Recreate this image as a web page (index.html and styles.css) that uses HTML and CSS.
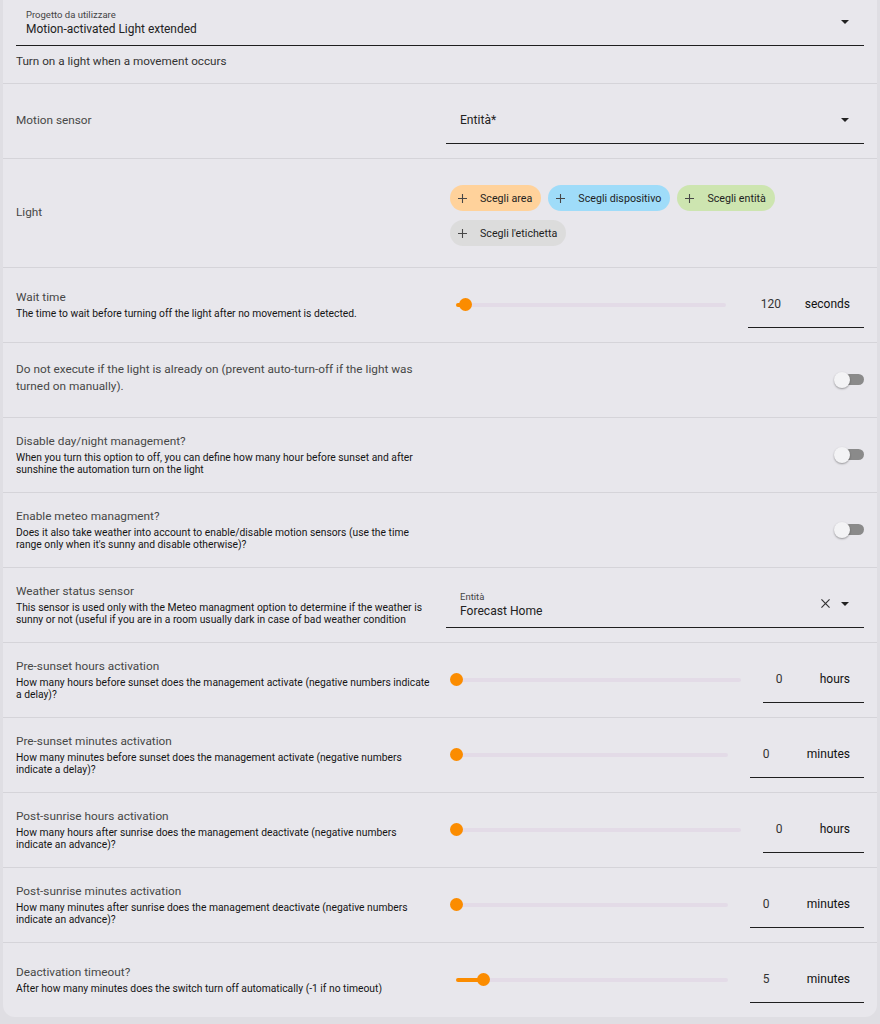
FILE: index.html
```html
<!DOCTYPE html>
<html lang="it">
<head>
<meta charset="utf-8">
<title>Blueprint</title>
<link rel="stylesheet" href="styles.css">
</head>
<body>
<div class="card">
  <div class="intro">
    <div class="select select-labelled">
      <div class="select-text">
        <span class="select-label">Progetto da utilizzare</span>
        <span class="select-value">Motion-activated Light extended</span>
      </div>
      <svg class="arrow" viewBox="0 0 10 5"><path d="M0 0h10L5 5z"/></svg>
    </div>
    <p class="intro-text">Turn on a light when a movement occurs</p>
  </div>

  <div class="row">
    <div class="info"><div class="title">Motion sensor</div></div>
    <div class="control">
      <div class="select">
        <div class="select-text"><span class="select-value">Entità*</span></div>
        <svg class="arrow" viewBox="0 0 10 5"><path d="M0 0h10L5 5z"/></svg>
      </div>
    </div>
  </div>

  <div class="row row-tall">
    <div class="info"><div class="title">Light</div></div>
    <div class="control">
      <div class="chips">
        <span class="chip chip-area"><svg class="plus" viewBox="0 0 10 10"><path d="M5 0v10M0 5h10"/></svg>Scegli area</span>
        <span class="chip chip-device"><svg class="plus" viewBox="0 0 10 10"><path d="M5 0v10M0 5h10"/></svg>Scegli dispositivo</span>
        <span class="chip chip-entity"><svg class="plus" viewBox="0 0 10 10"><path d="M5 0v10M0 5h10"/></svg>Scegli entità</span>
        <span class="chip chip-label"><svg class="plus" viewBox="0 0 10 10"><path d="M5 0v10M0 5h10"/></svg>Scegli l'etichetta</span>
      </div>
    </div>
  </div>

  <div class="row">
    <div class="info">
      <div class="title">Wait time</div>
      <div class="desc">The time to wait before turning off the light after no movement is detected.</div>
    </div>
    <div class="control">
      <div class="slider" style="--v: 3.5%"><span class="thumb"></span></div>
      <div class="number"><span class="num">120</span><span class="suffix">seconds</span></div>
    </div>
  </div>

  <div class="row">
    <div class="info info-solo">
      <div class="title">Do not execute if the light is already on (prevent auto-turn-off if the light was turned on manually).</div>
    </div>
    <div class="control control-end">
      <span class="toggle"><span class="knob"></span></span>
    </div>
  </div>

  <div class="row">
    <div class="info">
      <div class="title">Disable day/night management?</div>
      <div class="desc">When you turn this option to off, you can define how many hour before sunset and after sunshine the automation turn on the light</div>
    </div>
    <div class="control control-end">
      <span class="toggle"><span class="knob"></span></span>
    </div>
  </div>

  <div class="row">
    <div class="info">
      <div class="title">Enable meteo managment?</div>
      <div class="desc">Does it also take weather into account to enable/disable motion sensors (use the time range only when it's sunny and disable otherwise)?</div>
    </div>
    <div class="control control-end">
      <span class="toggle"><span class="knob"></span></span>
    </div>
  </div>

  <div class="row">
    <div class="info">
      <div class="title">Weather status sensor</div>
      <div class="desc">This sensor is used only with the Meteo managment option to determine if the weather is sunny or not (useful if you are in a room usually dark in case of bad weather condition</div>
    </div>
    <div class="control">
      <div class="select select-labelled">
        <div class="select-text">
          <span class="select-label">Entità</span>
          <span class="select-value">Forecast Home</span>
        </div>
        <svg class="clear" viewBox="0 0 10 10"><path d="M0.5 0.5l9 9M9.5 0.5l-9 9"/></svg>
        <svg class="arrow" viewBox="0 0 10 5"><path d="M0 0h10L5 5z"/></svg>
      </div>
    </div>
  </div>

  <div class="row">
    <div class="info">
      <div class="title">Pre-sunset hours activation</div>
      <div class="desc">How many hours before sunset does the management activate (negative numbers indicate a delay)?</div>
    </div>
    <div class="control">
      <div class="slider" style="--v: 0%"><span class="thumb"></span></div>
      <div class="number"><span class="num">0</span><span class="suffix">hours</span></div>
    </div>
  </div>

  <div class="row">
    <div class="info">
      <div class="title">Pre-sunset minutes activation</div>
      <div class="desc">How many minutes before sunset does the management activate (negative numbers indicate a delay)?</div>
    </div>
    <div class="control">
      <div class="slider" style="--v: 0%"><span class="thumb"></span></div>
      <div class="number"><span class="num">0</span><span class="suffix">minutes</span></div>
    </div>
  </div>

  <div class="row">
    <div class="info">
      <div class="title">Post-sunrise hours activation</div>
      <div class="desc">How many hours after sunrise does the management deactivate (negative numbers indicate an advance)?</div>
    </div>
    <div class="control">
      <div class="slider" style="--v: 0%"><span class="thumb"></span></div>
      <div class="number"><span class="num">0</span><span class="suffix">hours</span></div>
    </div>
  </div>

  <div class="row">
    <div class="info">
      <div class="title">Post-sunrise minutes activation</div>
      <div class="desc">How many minutes after sunrise does the management deactivate (negative numbers indicate an advance)?</div>
    </div>
    <div class="control">
      <div class="slider" style="--v: 0%"><span class="thumb"></span></div>
      <div class="number"><span class="num">0</span><span class="suffix">minutes</span></div>
    </div>
  </div>

  <div class="row row-last">
    <div class="info">
      <div class="title">Deactivation timeout?</div>
      <div class="desc">After how many minutes does the switch turn off automatically (-1 if no timeout)</div>
    </div>
    <div class="control">
      <div class="slider" style="--v: 10.3%"><span class="thumb"></span></div>
      <div class="number"><span class="num">5</span><span class="suffix">minutes</span></div>
    </div>
  </div>
</div>
</body>
</html>
```

FILE: styles.css
```css
* { box-sizing: border-box; }

html, body {
  margin: 0;
  padding: 0;
}

body {
  background: #dfdee3;
  font-family: Roboto, "Noto Sans", "Liberation Sans", sans-serif;
  color: #222;
  height: 1024px;
  overflow: hidden;
}

.card {
  margin: 0 3px;
  background: #e8e7ec;
  border-radius: 0 0 12px 12px;
}

.intro {
  padding: 0 13px 14px;
  border-bottom: 1px solid #d5d4d9;
  height: 84px;
}

.intro-text {
  margin: 7px 0 0;
  font-size: 11.7px;
  line-height: 16px;
  color: #333;
}

/* select field */
.select {
  height: 46px;
  display: flex;
  align-items: center;
  padding: 0 15px 0 14px;
  border-bottom: 1px solid #1f1f1f;
  width: 100%;
}

.select-labelled {
  align-items: flex-start;
}

.intro .select {
  height: 46px;
  padding-left: 10px;
}

.select-text {
  flex: 1;
  display: flex;
  flex-direction: column;
}

.select-labelled .select-text {
  padding-top: 9px;
}

.select-label {
  font-size: 9.5px;
  line-height: 12px;
  color: #444;
}

.select-value {
  font-size: 12.1px;
  line-height: 16px;
  color: #222;
}

.intro .select-value {
  font-size: 11.95px;
}

.arrow {
  width: 8px;
  height: 4px;
  fill: #222;
  flex: none;
}

.select-labelled .arrow {
  margin-top: 20px;
}

.clear {
  width: 9px;
  height: 9px;
  stroke: #333;
  stroke-width: 1.3;
  fill: none;
  flex: none;
  margin: 17.5px 11px 0 0;
}

/* rows */
.row {
  display: grid;
  grid-template-columns: 1fr 418px;
  column-gap: 16px;
  align-items: center;
  height: 75px;
  padding: 0 13px 1px;
  border-bottom: 1px solid #d5d4d9;
}

.row-tall {
  height: 109px;
}

.row-last {
  border-bottom: none;
  height: 74px;
}

.info {
  min-width: 0;
}

.info-solo {
  padding-bottom: 3px;
}

.title {
  font-size: 11.8px;
  line-height: 17px;
  color: #474747;
}

.desc {
  margin-top: 2.5px;
  font-size: 10.3px;
  line-height: 12px;
  color: #151515;
}

.control {
  display: flex;
  align-items: center;
  min-width: 0;
}

.control-end {
  justify-content: flex-end;
}

/* chips */
.chips {
  display: flex;
  flex-wrap: wrap;
  gap: 9px 7px;
  padding: 6px 0 0 4px;
}

.chip {
  display: inline-flex;
  align-items: center;
  height: 26px;
  border-radius: 13px;
  padding: 0 9px 0 8px;
  font-size: 10.7px;
  font-weight: 400;
  color: #1e1e1e;
}

.plus {
  width: 9px;
  height: 9px;
  stroke: #474747;
  stroke-width: 1.2;
  fill: none;
  margin-right: 13px;
  flex: none;
}

.chip-area { background: #ffd29b; }
.chip-device { background: #9fdcf9; }
.chip-entity { background: #cde5b0; }
.chip-label { background: #dcdcdc; }

/* slider */
.slider {
  flex: 1;
  position: relative;
  height: 4px;
  margin: 0 22px 0 10px;
  border-radius: 2px;
  background: linear-gradient(to right, #fb8c00 var(--v), #e3dbe7 var(--v));
}

.thumb {
  position: absolute;
  top: 50%;
  left: var(--v);
  width: 13px;
  height: 13px;
  margin: -6.5px 0 0 -6.5px;
  border-radius: 50%;
  background: #fb8c00;
}

/* number field */
.number {
  flex: none;
  height: 46px;
  display: flex;
  align-items: center;
  padding: 0 14px 0 13px;
  border-bottom: 1px solid #1f1f1f;
  font-size: 12px;
}

.num {
  width: 44px;
  color: #333;
}

.suffix {
  color: #111;
}

/* toggle */
.toggle {
  position: relative;
  width: 26px;
  height: 11px;
  border-radius: 6px;
  background: #8a8a8a;
}

.knob {
  position: absolute;
  left: -4px;
  top: 50%;
  width: 16px;
  height: 16px;
  margin-top: -8px;
  border-radius: 50%;
  background: #f3f3f5;
  box-shadow: 0 1px 2px rgba(0, 0, 0, 0.35);
}
```
